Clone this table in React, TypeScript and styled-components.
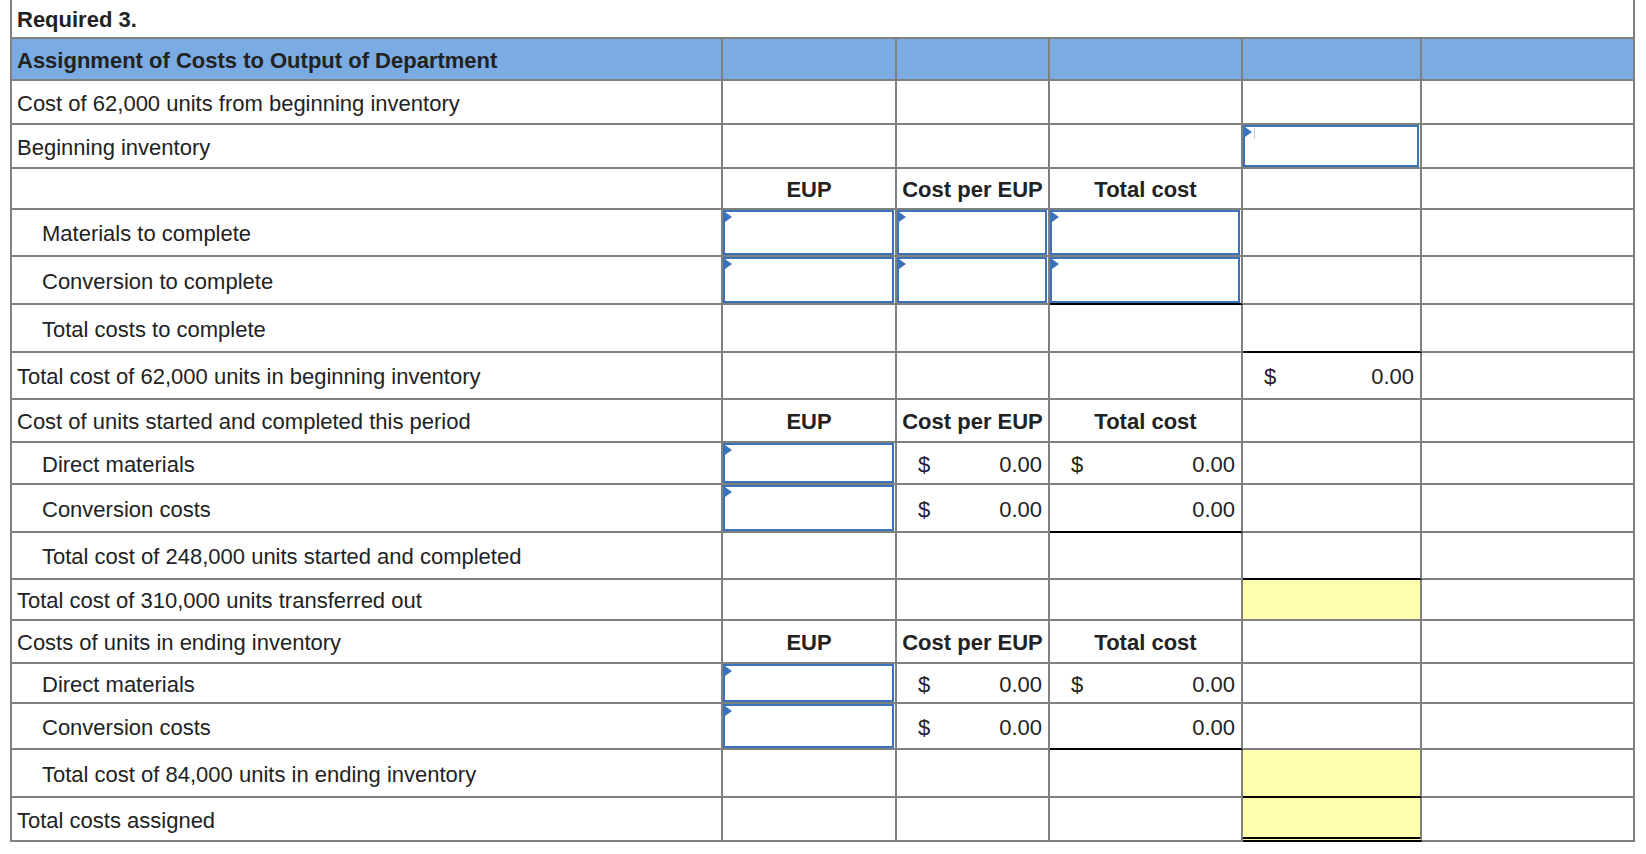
import React from "react";
import styled, { createGlobalStyle, css } from "styled-components";

const GRID = "#808080";
const BLUE_FILL = "#7aabe2";
const YELLOW = "#ffffae";
const INPUT_BLUE = "#3a73ba";
const INK = "#222222";

const GlobalStyle = createGlobalStyle`
  html, body {
    margin: 0;
    padding: 0;
    background: #ffffff;
  }
  body {
    font-family: "Liberation Sans", Arial, Helvetica, sans-serif;
    color: ${INK};
  }
`;

const Page = styled.div`
  padding-left: 10px;
`;

const Sheet = styled.div`
  width: 1625px;
  box-sizing: border-box;
  border-left: 2px solid ${GRID};
  display: flex;
  flex-direction: column;
`;

const Row = styled.div<{ $h: number }>`
  display: grid;
  grid-template-columns: 711px 174px 153px 193px 179px 213px;
  height: ${(p) => p.$h}px;
`;

const TitleCell = styled.div`
  grid-column: 1 / -1;
  box-sizing: border-box;
  border-right: 2px solid ${GRID};
  border-bottom: 2px solid ${GRID};
  display: flex;
  align-items: center;
  padding: 3px 0 0 5px;
  font-size: 22px;
  font-weight: 700;
`;

type Line = "black" | "double" | undefined;
type Fill = "blue" | "yellow" | undefined;

const Cell = styled.div<{ $line?: Line; $fill?: Fill }>`
  box-sizing: border-box;
  border-right: 2px solid ${GRID};
  border-bottom: ${(p) =>
    p.$line === "double"
      ? "5px double #000000"
      : p.$line === "black"
      ? "2px solid #000000"
      : `2px solid ${GRID}`};
  background: ${(p) =>
    p.$fill === "blue" ? BLUE_FILL : p.$fill === "yellow" ? YELLOW : "#ffffff"};
  display: flex;
  align-items: center;
  font-size: 22px;
  min-width: 0;
`;

const LabelCell = styled(Cell)<{ $indent?: boolean; $bold?: boolean }>`
  padding: 3px 0 0 ${(p) => (p.$indent ? 30 : 5)}px;
  font-weight: ${(p) => (p.$bold ? 700 : 400)};
  white-space: nowrap;
`;

const HeadCell = styled(Cell)`
  justify-content: center;
  padding-top: 3px;
  font-weight: 700;
  white-space: nowrap;
`;

const MoneyCell = styled(Cell)`
  justify-content: space-between;
  padding: 3px 6px 0 21px;
`;

const Amount = styled.span`
  margin-left: auto;
`;

const InputCell = styled(Cell)`
  align-items: stretch;
  padding-right: 1px;
`;

const InputBox = styled.div<{ $caret?: boolean }>`
  position: relative;
  flex: 1;
  box-sizing: border-box;
  border: 2px solid ${INPUT_BLUE};
  background: #ffffff;

  &::before {
    content: "";
    position: absolute;
    top: 0;
    left: 0;
    width: 0;
    height: 0;
    border-left: 7px solid ${INPUT_BLUE};
    border-top: 5px solid transparent;
    border-bottom: 5px solid transparent;
  }

  ${(p) =>
    p.$caret &&
    css`
      &::after {
        content: "";
        position: absolute;
        top: 1px;
        left: 9px;
        width: 1px;
        height: 11px;
        background: #b8cde8;
      }
    `}
`;

type Spec =
  | { k: "empty"; line?: Line; fill?: Fill }
  | { k: "input"; line?: Line; caret?: boolean }
  | { k: "head"; text: string }
  | { k: "money"; dollar: boolean; line?: Line };

type RowSpec = {
  label: string;
  h: number;
  indent?: boolean;
  bold?: boolean;
  fill?: Fill;
  cells?: Partial<Record<1 | 2 | 3 | 4 | 5, Spec>>;
};

const heads: RowSpec["cells"] = {
  1: { k: "head", text: "EUP" },
  2: { k: "head", text: "Cost per EUP" },
  3: { k: "head", text: "Total cost" },
};

const rows: RowSpec[] = [
  { label: "Assignment of Costs to Output of Department", h: 42, bold: true, fill: "blue" },
  { label: "Cost of 62,000 units from beginning inventory", h: 44 },
  { label: "Beginning inventory", h: 44, cells: { 4: { k: "input", caret: true } } },
  { label: "", h: 41, cells: heads },
  {
    label: "Materials to complete",
    h: 47,
    indent: true,
    cells: { 1: { k: "input" }, 2: { k: "input" }, 3: { k: "input" } },
  },
  {
    label: "Conversion to complete",
    h: 48,
    indent: true,
    cells: { 1: { k: "input" }, 2: { k: "input" }, 3: { k: "input", line: "black" } },
  },
  {
    label: "Total costs to complete",
    h: 48,
    indent: true,
    cells: { 4: { k: "empty", line: "black" } },
  },
  {
    label: "Total cost of 62,000 units in beginning inventory",
    h: 47,
    cells: { 4: { k: "money", dollar: true } },
  },
  { label: "Cost of units started and completed this period", h: 43, cells: heads },
  {
    label: "Direct materials",
    h: 42,
    indent: true,
    cells: {
      1: { k: "input" },
      2: { k: "money", dollar: true },
      3: { k: "money", dollar: true },
    },
  },
  {
    label: "Conversion costs",
    h: 48,
    indent: true,
    cells: {
      1: { k: "input" },
      2: { k: "money", dollar: true },
      3: { k: "money", dollar: false, line: "black" },
    },
  },
  {
    label: "Total cost of 248,000 units started and completed",
    h: 47,
    indent: true,
    cells: { 4: { k: "empty", line: "black" } },
  },
  {
    label: "Total cost of 310,000 units transferred out",
    h: 41,
    cells: { 4: { k: "empty", fill: "yellow" } },
  },
  { label: "Costs of units in ending inventory", h: 43, cells: heads },
  {
    label: "Direct materials",
    h: 40,
    indent: true,
    cells: {
      1: { k: "input" },
      2: { k: "money", dollar: true },
      3: { k: "money", dollar: true },
    },
  },
  {
    label: "Conversion costs",
    h: 46,
    indent: true,
    cells: {
      1: { k: "input" },
      2: { k: "money", dollar: true },
      3: { k: "money", dollar: false, line: "black" },
    },
  },
  {
    label: "Total cost of 84,000 units in ending inventory",
    h: 48,
    indent: true,
    cells: { 4: { k: "empty", fill: "yellow", line: "black" } },
  },
  {
    label: "Total costs assigned",
    h: 44,
    cells: { 4: { k: "empty", fill: "yellow", line: "double" } },
  },
];

function renderCell(spec: Spec | undefined, rowFill: Fill, key: number) {
  if (!spec || spec.k === "empty") {
    return (
      <Cell
        key={key}
        $line={spec?.line}
        $fill={spec && spec.k === "empty" && spec.fill ? spec.fill : rowFill}
      />
    );
  }
  if (spec.k === "input") {
    return (
      <InputCell key={key} $line={spec.line}>
        <InputBox $caret={spec.caret} />
      </InputCell>
    );
  }
  if (spec.k === "head") {
    return <HeadCell key={key}>{spec.text}</HeadCell>;
  }
  return (
    <MoneyCell key={key} $line={spec.line}>
      {spec.dollar && <span>$</span>}
      <Amount>0.00</Amount>
    </MoneyCell>
  );
}

export default function App() {
  return (
    <>
      <GlobalStyle />
      <Page>
        <Sheet>
          <Row $h={39}>
            <TitleCell>Required 3.</TitleCell>
          </Row>
          {rows.map((r, i) => (
            <Row key={i} $h={r.h}>
              <LabelCell $indent={r.indent} $bold={r.bold} $fill={r.fill}>
                {r.label}
              </LabelCell>
              {([1, 2, 3, 4, 5] as const).map((c) =>
                renderCell(r.cells?.[c], r.fill, c)
              )}
            </Row>
          ))}
        </Sheet>
      </Page>
    </>
  );
}
